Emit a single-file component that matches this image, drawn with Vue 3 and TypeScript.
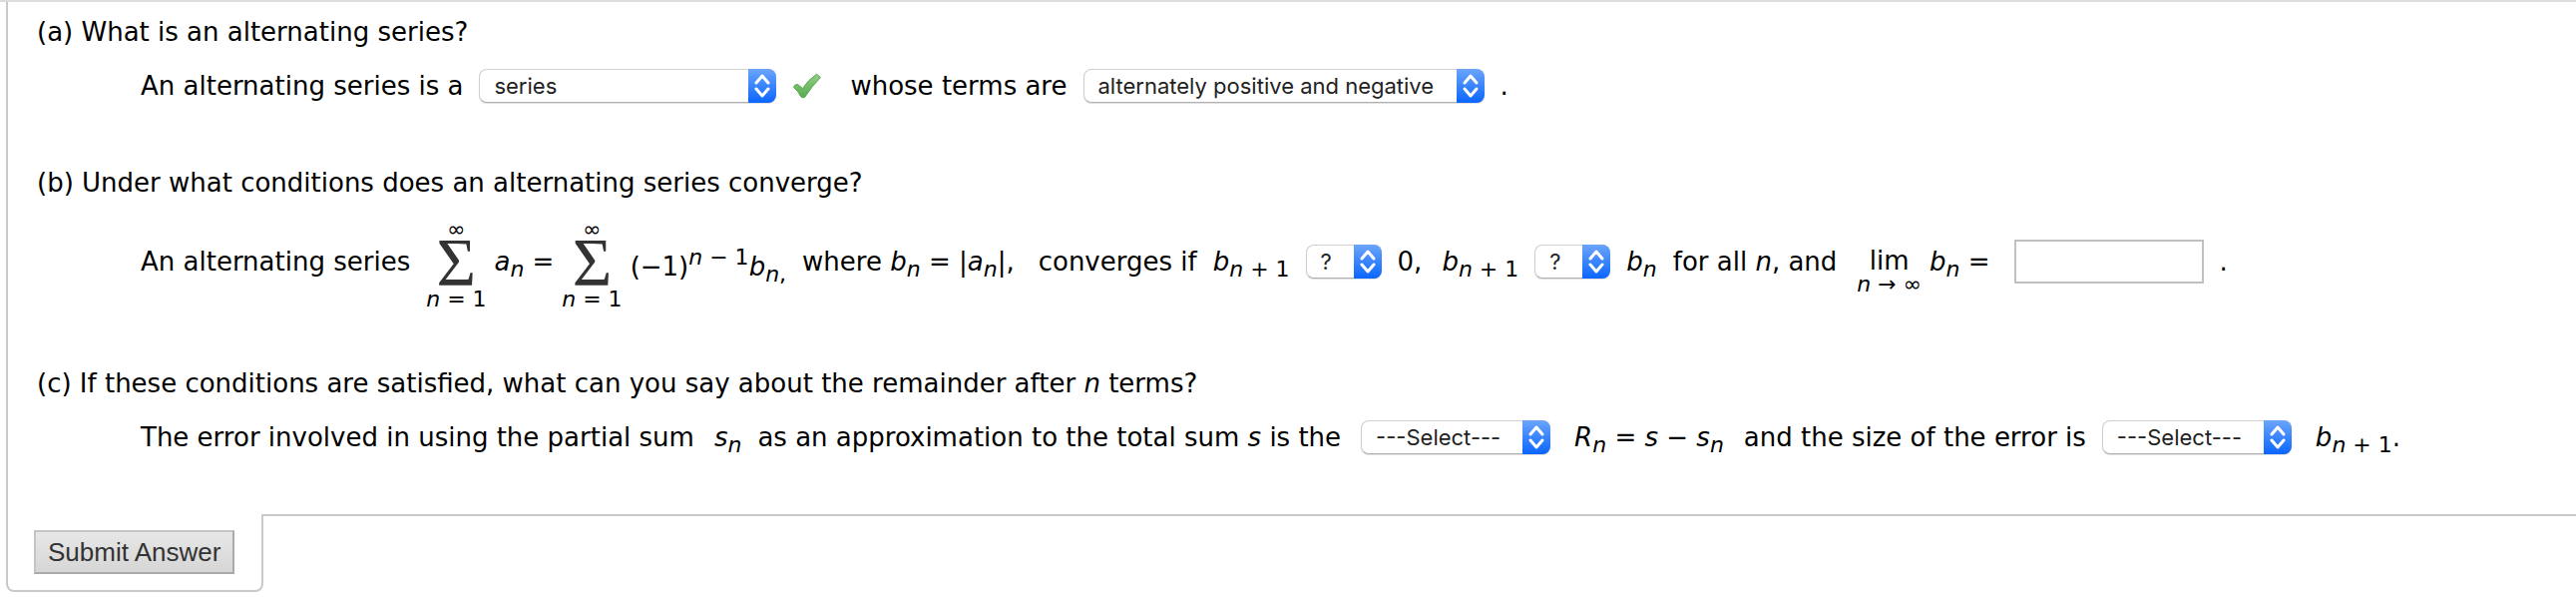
<script setup lang="ts">
import { ref } from 'vue'

interface Choice {
  value: string
  wide: string
  label: string
  options: string[]
}

const noun = ref<Choice>({ value: 'series', wide: 'w-noun', label: 'An alternating series is a', options: ['series', 'sequence', 'function'] })
const terms = ref<Choice>({ value: 'alternately positive and negative', wide: 'w-terms', label: 'whose terms are', options: ['alternately positive and negative', 'all positive', 'all negative'] })
const first = ref<Choice>({ value: '?', wide: 'w-sign', label: 'relation to 0', options: ['?', '<', '>', '≤', '≥', '='] })
const second = ref<Choice>({ value: '?', wide: 'w-sign', label: 'relation to b n', options: ['?', '<', '>', '≤', '≥', '='] })
const remainder = ref<Choice>({ value: '---Select---', wide: 'w-pick', label: 'total sum s is the', options: ['---Select---', 'remainder', 'limit'] })
const size = ref<Choice>({ value: '---Select---', wide: 'w-pick', label: 'size of the error is', options: ['---Select---', 'less than', 'greater than'] })
const limit = ref('')
const chevrons = 'M8 14l6-7 6 7M8 20l6 7 6-7'
</script>

<template>
  <form class="question" @submit.prevent>
    <main class="body">
      <h2>(a) What is an alternating series?</h2>
      <div class="row">
        <span>An alternating series is a</span>
        <span class="pick" :class="noun.wide">
          <select v-model="noun.value" :aria-label="noun.label"><option v-for="o in noun.options" :key="o">{{ o }}</option></select>
          <svg class="arrows" viewBox="0 0 28 34" aria-hidden="true"><path :d="chevrons" /></svg>
        </span>
        <svg class="check" viewBox="0 0 30 26" role="img" aria-label="correct">
          <defs>
            <linearGradient id="leaf" x1="0" y1="0" x2="0" y2="1">
              <stop offset="0" stop-color="#8fd083" />
              <stop offset="1" stop-color="#58ab50" />
            </linearGradient>
          </defs>
          <path d="M1.500 14.500Q2 11.500 5.500 11.500L10.500 15.500Q16 7 24.500 1.200L28.500 4.500Q20 13 12.500 24.500Q10 25.500 8.500 23.500Q6 18 1.500 14.500z" />
        </svg>
        <span class="after">whose terms are</span>
        <span class="pick" :class="terms.wide">
          <select v-model="terms.value" :aria-label="terms.label"><option v-for="o in terms.options" :key="o">{{ o }}</option></select>
          <svg class="arrows" viewBox="0 0 28 34" aria-hidden="true"><path :d="chevrons" /></svg>
        </span>
        <span>.</span>
      </div>

      <h2 class="h-b">(b) Under what conditions does an alternating series converge?</h2>
      <div class="row row-b">
        <span>An alternating series</span>
        <span class="math">
          <span class="sum"><span class="top">∞</span><span class="sigma">Σ</span><span class="low"><i>n</i> = 1</span></span>
          <span><i>a<sub>n</sub></i></span>
          <span>=</span>
          <span class="sum"><span class="top">∞</span><span class="sigma">Σ</span><span class="low"><i>n</i> = 1</span></span>
          <span class="power">(−1)<sup><i>n</i> − 1</sup><i>b<sub>n</sub></i><sub>,</sub></span>
          <span class="wide">where <i>b<sub>n</sub></i> = |<i>a<sub>n</sub></i>|,</span>
        </span>
        <span class="wide">converges if</span>
        <span><i>b<sub>n</sub></i><sub> + 1</sub></span>
        <span class="pick" :class="first.wide">
          <select v-model="first.value" :aria-label="first.label"><option v-for="o in first.options" :key="o">{{ o }}</option></select>
          <svg class="arrows" viewBox="0 0 28 34" aria-hidden="true"><path :d="chevrons" /></svg>
        </span>
        <span>0,</span>
        <span class="wider"><i>b<sub>n</sub></i><sub> + 1</sub></span>
        <span class="pick" :class="second.wide">
          <select v-model="second.value" :aria-label="second.label"><option v-for="o in second.options" :key="o">{{ o }}</option></select>
          <svg class="arrows" viewBox="0 0 28 34" aria-hidden="true"><path :d="chevrons" /></svg>
        </span>
        <span><i>b<sub>n</sub></i></span>
        <span>for all <i>n</i>, and</span>
        <span class="math wider">
          <span class="lim"><span>lim</span><span class="low"><i>n</i> → ∞</span></span>
          <span><i>b<sub>n</sub></i> =</span>
        </span>
        <input v-model="limit" class="answer wide" type="text" aria-label="limit of b n">
        <span>.</span>
      </div>

      <h2 class="h-c">(c) If these conditions are satisfied, what can you say about the remainder after <i>n</i> terms?</h2>
      <div class="row">
        <span>The error involved in using the partial sum</span>
        <span class="wider"><i>s<sub>n</sub></i></span>
        <span>as an approximation to the total sum <i>s</i> is the</span>
        <span class="pick wider" :class="remainder.wide">
          <select v-model="remainder.value" :aria-label="remainder.label"><option v-for="o in remainder.options" :key="o">{{ o }}</option></select>
          <svg class="arrows" viewBox="0 0 28 34" aria-hidden="true"><path :d="chevrons" /></svg>
        </span>
        <span class="wide"><i>R<sub>n</sub></i> = <i>s</i> − <i>s<sub>n</sub></i></span>
        <span class="wider">and the size of the error is</span>
        <span class="pick" :class="size.wide">
          <select v-model="size.value" :aria-label="size.label"><option v-for="o in size.options" :key="o">{{ o }}</option></select>
          <svg class="arrows" viewBox="0 0 28 34" aria-hidden="true"><path :d="chevrons" /></svg>
        </span>
        <span class="wide"><i>b<sub>n</sub></i><sub> + 1</sub>.</span>
      </div>
    </main>
    <footer class="foot">
      <div class="tab"><button type="submit">Submit Answer</button></div>
      <div class="edge"></div>
    </footer>
  </form>
</template>

<style>
body {
  margin: 0;
  background: #fff;
}
</style>

<style scoped>
.question {
  border-top: 2px solid #ddd;
  padding-left: 6px;
  color: #000;
  font: 26px/32px "DejaVu Sans", Verdana, sans-serif;
  white-space: nowrap;
}
.body {
  border-left: 2px solid #c9c9c9;
  padding: 14px 0 60px 29px;
}
h2 {
  margin: 0;
  font-size: 26px;
  font-weight: 400;
}
.h-b {
  margin-top: 64px;
}
.h-c {
  margin-top: 57px;
}
.row {
  display: flex;
  align-items: center;
  gap: 16px;
  height: 34px;
  margin-top: 21px;
  padding-left: 104px;
}
.row-b {
  height: auto;
  margin-top: 13px;
}
.math {
  display: flex;
  align-items: center;
  gap: 8px;
}
.after {
  margin-left: 12px;
}
.wide {
  margin-left: 8px;
}
.wider {
  margin-left: 4px;
}
sub,
sup,
.low,
.top {
  font-size: 22px;
}
sub,
sup {
  line-height: 0;
  vertical-align: -6px;
}
sup {
  vertical-align: 11px;
}
.sum,
.lim {
  display: flex;
  flex-direction: column;
  align-items: center;
}
.sum {
  padding-top: 8px;
}
.top {
  line-height: 20px;
}
.sigma {
  margin-bottom: 4px;
  color: #333;
  font: 68px/45px "Liberation Serif", serif;
}
.low {
  line-height: 22px;
}
.lim {
  padding-top: 20px;
  line-height: 26px;
}
.power {
  padding-top: 10px;
}
.pick {
  position: relative;
  display: flex;
}
.w-noun {
  width: 298px;
}
.w-terms {
  width: 402px;
}
.w-sign {
  width: 76px;
}
.w-pick {
  width: 190px;
}
select {
  appearance: none;
  box-sizing: border-box;
  width: 100%;
  height: 34px;
  border: 1px solid #cfcfcf;
  border-bottom-color: #b0b0b0;
  border-radius: 8px;
  padding: 0 0 0 14px;
  background: #fff;
  box-shadow: 0 1px 1px #ddd;
  color: #222;
  font: 22px/30px Inter, sans-serif;
}
.arrows {
  position: absolute;
  top: 0;
  right: 0;
  width: 28px;
  height: 34px;
  border-radius: 0 8px 8px 0;
  background: linear-gradient(#6ba5fb, #0a65ff);
  fill: none;
  stroke: #fff;
  stroke-width: 3;
  stroke-linecap: round;
  stroke-linejoin: round;
  pointer-events: none;
}
.check {
  width: 30px;
  height: 26px;
  fill: url(#leaf);
  stroke: #5aa552;
  stroke-width: 1;
}
.answer {
  box-sizing: border-box;
  width: 190px;
  height: 44px;
  border: 2px solid #c0c0c0;
  padding: 0 8px;
  font: inherit;
}
.foot {
  display: flex;
}
.tab {
  display: flex;
  border: 2px solid #c9c9c9;
  border-top: 0;
  border-radius: 0 0 8px 8px;
  padding: 16px 27px 16px 26px;
}
.edge {
  flex: 1;
  border-top: 2px solid #c9c9c9;
}
button {
  border: 2px solid #c4c4c4;
  border-right-color: #aaa;
  border-bottom-color: #aaa;
  border-radius: 0;
  padding: 0 12px;
  background: linear-gradient(#e7e7e7, #d6d6d6);
  color: #333;
  font: 26px/40px "Liberation Sans", Arial, sans-serif;
}
</style>
